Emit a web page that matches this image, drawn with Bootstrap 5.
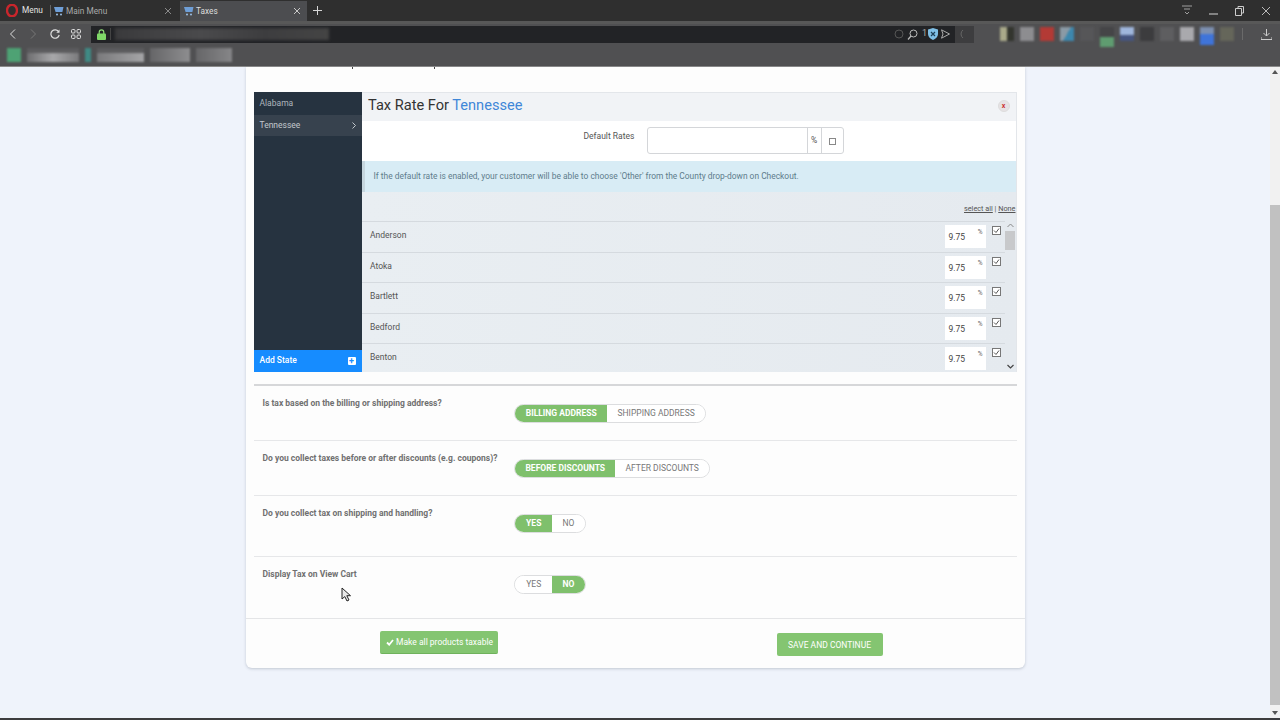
<!DOCTYPE html>
<html lang="en">
<head>
<meta charset="utf-8">
<title>Taxes</title>
<link href="https://cdn.jsdelivr.net/npm/bootstrap@5.3.0/dist/css/bootstrap.min.css" rel="stylesheet">
<style>
html,body{height:720px;overflow:hidden;background:#eff3fb;font-family:Roboto,"Liberation Sans",sans-serif}
.tabstrip{height:21px;background:#2f2f2f;color:#c9c9c9;font-size:8.3px}
.opera-menu{width:50px;padding-left:6px;gap:4px;color:#e4e4e4}
.sep-v{width:1px;height:12px;background:#666}
.tab-item{height:20px;padding:0 6px 0 4px;gap:2px;margin-top:1px}
.tab-main{width:129px;color:#a9a9a9;padding-left:3px;padding-right:8px}
.tab-active{background:#4c4d50;width:127px;color:#ddd}
.tab-x{margin-left:auto;display:flex}
.plus-tab{margin-left:6px}
.win-ctl{margin-left:auto;gap:17px;padding-right:9px}
.toolbar{height:23px;background:#505052;border-top:3px solid #585858}
.nav-ico{width:91px;padding-left:9px;gap:13.5px}
.nav-grid{margin-left:-3px}
.urlbar{width:883px;height:17px;background:#222326;padding-left:6px;gap:4px}
.url-sep{width:1px;height:12px;background:#444}
.url-blur{width:214px;height:12px;background:linear-gradient(90deg,#3a3a3c,#4a4a4c 40%,#3d3d3f 70%,#444);filter:blur(1.5px)}
.url-tools{margin-left:auto;gap:3px;color:#aaa;font-size:9px}
.tool-one{margin-left:1px}
.shield-ico{margin-left:-2px}
.moon-box{height:17px;width:19px;background:#3d3d3f;margin-left:2px;display:flex;align-items:center}
.ext-tiles{gap:6px;margin-left:26px}
.tile{width:14px;height:14px;filter:blur(.8px)}
.t1{background:linear-gradient(90deg,#a9a98a 50%,#33352e 50%)}
.t2{background:#8d8d90}.t3{background:#b33a35}.t4{background:linear-gradient(120deg,#8b9aa5 50%,#3d87ad 50%)}
.t5{background:#565658}.t6{background:linear-gradient(180deg,#454547 50%,#5f9c70 50%);height:20px;margin-top:6px}
.t7{background:linear-gradient(180deg,#9fb6dc 60%,#46557f 60%)}.t8{background:#3c3c3e}.t9{background:#5e5e60}.t10{background:#a9a9ad}
.t11{background:linear-gradient(180deg,#7c8fb0 40%,#3f74d9 40%);height:18px;margin-top:4px}.t12{background:#65665a}
.ext-sep{width:1px;height:12px;background:#6a6a6a;margin-left:8px}
.bookbar{height:23px;background:#505052;padding-left:7px;gap:6px;border-bottom:1px solid #8a8a8a}
.bk{height:14px;filter:blur(1.2px)}
.bk-g{width:14px;background:#4ea274}.bk-t{width:6px;background:#3f8a84}
.bk-a{width:52px;background:linear-gradient(180deg,#5c5c5e 35%,transparent 35%),linear-gradient(90deg,#6e6e70,#a8a8aa 50%,#7a7a7c)}
.bk-b{width:47px;background:linear-gradient(180deg,#5c5c5e 35%,transparent 35%),linear-gradient(90deg,#7a7a7c,#a5a5a7)}
.bk-c{width:40px;background:linear-gradient(90deg,#666668,#8e8e90)}.bk-d{width:36px;background:linear-gradient(90deg,#666668,#868688)}
.pagewrap{height:651px}
.pagemain{flex:1 1 auto;min-width:0}
.sbar{width:10px;background:#f1f1f1;position:relative}
.sbar-thumb{background:#c1c1c1;height:500px;margin-top:128px}
.sbar-up,.sbar-down{height:10px;display:flex;justify-content:center;align-items:center}
.sbar-down{position:absolute;bottom:0;left:0;right:0}
.sheet{width:779px;height:601px;background:#fdfdfd;border-radius:0 0 6px 6px;box-shadow:0 1px 3px rgba(60,70,90,.25);padding:25px 8px 0;position:relative}
.tick{position:absolute;top:0;width:1px;height:2px;background:#444}
.tick-a{left:106px}.tick-b{left:188px}
.panel{height:280px;border-top:1px solid #e3e6ea;border-right:1px solid #e3e6ea}
.side{width:108px;background:#263340;color:#b5bcc3;font-size:8.5px;margin-top:-1px}
.side-item{height:23px;padding:0 6px;color:#aeb6bd}
.side-on{background:#37424e;color:#c2c8cd;height:21px}
.side-add{height:22px;margin-top:auto;background:#168cff;color:#fff;padding:0 6px 2px;font-weight:500}
.plus-box{width:8px;height:8px;background:#fff;border-radius:1px;color:#168cff;font-size:9px;line-height:8px;text-align:center;font-weight:700;margin-top:2px}
.ratepane{min-width:0}
.rp-head{height:28px;background:#f1f3f6;padding:0 6px 2px 6.5px;color:#333;font-size:14.6px}
.rp-head .st{color:#3f87d8}
.close-dot{width:12px;height:12px;border-radius:50%;background:#e6e2e4;border:1px solid #ddd;color:#c33;font-size:7px;line-height:10px;text-align:center;font-weight:700}
.rp-def{height:40px;background:#fff;font-size:8.5px;color:#555;padding-top:6px;padding-left:222px;gap:0}
.rp-lab{width:63px;padding-top:3px}
.grp{height:27px;border:1px solid #d4d6d9;border-radius:3px;width:197px;background:#fff;color:#555}
.grp-in{flex:1 1 auto}
.grp-p{width:14px;border-left:1px solid #d4d6d9;font-size:8.5px}
.grp-c{width:22px;border-left:1px solid #d4d6d9}
.cb-empty{width:7px;height:7px;border:1px solid #888;display:block;margin-top:2px}
.rp-note{height:31px;margin:0;padding:0 9px;background:#d8ecf5;border:0;border-left:3px solid #c6d6de;border-radius:0;color:#5e7c8c;font-size:8.42px}
.rp-list{flex:1 1 auto;min-height:0;background:linear-gradient(90deg,#e9eef2,#e5eaef);position:relative}
.rp-sel{height:29px;padding:0 0 6px;font-size:7.3px;color:#555}
.rp-sel a{color:#555}
.rp-rows{height:151px;overflow:hidden;padding-right:11px}
.rp-row{height:30.5px;border-top:1px solid #d5dadf;font-size:8.5px;color:#555;padding-left:8.5px;position:relative}
.rp-name{padding-top:7px}
.rp-input{width:41px;height:23px;background:#fff;margin-top:3px;margin-left:auto;position:relative;font-size:8.5px;color:#444;padding:6px 0 0 4px}
.rp-input i{position:absolute;right:3px;top:3px;font-size:6.5px;font-style:normal;color:#666}
.rp-chk{width:19px;padding:2px 0 0 6px}
.in-sb{position:absolute;right:0;top:29px;bottom:0;width:11px}
.in-thumb{width:10px;height:19px;background:#c8c9cb;margin:1px auto 0}
.in-arrow{height:9px;display:flex;justify-content:center;align-items:center}
.in-arrow-d{position:absolute;bottom:1px;left:0;right:0}
.qrow{border-top:1px solid #e6e7e9;padding-left:9px;font-size:8.5px;color:#707070;font-weight:700}
.q1{height:56px;border-top:2px solid #d6d7d9;margin-top:12px}
.q2{height:55px}.q3{height:61px}.q4{height:61.5px}
.qtext{width:251.5px;padding-top:11px}
.pill{border:1px solid #dcdddf;border-radius:10px;overflow:hidden;background:#fff;font-size:8.5px;font-weight:400;margin-top:18px;height:19px}
.pill .btn{border:0;border-radius:0;padding:0 10.5px 0 11px;font-size:8.5px;line-height:17px;color:#777;text-transform:uppercase;background:#fff}
.pill .btn.is-on{background:#7fc06c;color:#fff;font-weight:700}
.pill .btn.w-93x{width:92.5px;padding:0}
.pill .btn.w-101x{width:100.5px;padding:0}
.pill .btn.w-38x{width:37.5px;padding:0}
.foot{border-top:1px solid #e4e5e7;margin:0 -8px;height:49px;padding-left:134px;align-items:flex-start}
.foot .btn{background:#84c571;border:0;color:#fff;border-radius:2px;font-family:"Roboto",sans-serif;font-size:8.5px;padding:0}
.foot .btn-tax{width:118px;height:23px;margin-top:12px;border-bottom:1px solid #6fb25c;padding:2px 0 0 2px}
.foot .btn-save{width:106px;height:23px;margin-top:14px;margin-left:279px;padding:3px 0 0}
.bottomline{height:2px;background:#3c3c3e}
.cursor-pt{position:absolute;left:341px;top:587px;pointer-events:none}
</style>
</head>
<body class="position-relative">
<div class="tabstrip d-flex align-items-center">
  <div class="opera-menu d-flex align-items-center">
    <svg width="12" height="13" viewBox="0 0 12 13"><ellipse cx="6" cy="6.500" rx="5" ry="5.800" fill="none" stroke="#c8262c" stroke-width="2.400"/></svg><span>Menu</span>
  </div>
  <span class="sep-v"></span>
  <div class="tab-item tab-main d-flex align-items-center">
    <svg width="10" height="10" viewBox="0 0 10 10"><path d="M0 1h9.500L8.400 6H1.600z" fill="#6f9fd8"/><circle cx="3" cy="8.400" r="1" fill="#9cc0e6"/><circle cx="7" cy="8.400" r="1" fill="#9cc0e6"/></svg>
    <span>Main Menu</span>
    <span class="tab-x"><svg width="8" height="8" viewBox="0 0 8 8"><path d="M1 1l6 6M7 1L1 7" stroke="#8a8a8a"/></svg></span>
  </div>
  <div class="tab-item tab-active d-flex align-items-center">
    <svg width="10" height="10" viewBox="0 0 10 10"><path d="M0 1h9.500L8.400 6H1.600z" fill="#6f9fd8"/><circle cx="3" cy="8.400" r="1" fill="#9cc0e6"/><circle cx="7" cy="8.400" r="1" fill="#9cc0e6"/></svg>
    <span>Taxes</span>
    <span class="tab-x"><svg width="8" height="8" viewBox="0 0 8 8"><path d="M1 1l6 6M7 1L1 7" stroke="#c8c8c8"/></svg></span>
  </div>
  <svg class="plus-tab" width="9" height="9" viewBox="0 0 9 9"><path d="M4.500 0v9M0 4.500h9" stroke="#d5d5d5"/></svg>
  <div class="win-ctl d-flex align-items-center">
    <svg width="10" height="11" viewBox="0 0 10 11"><path d="M0 1h10M2 4h6M3 7l2 2 2-2" stroke="#a0a0a0" fill="none"/></svg>
    <svg width="9" height="9" viewBox="0 0 9 9"><path d="M0 8h9" stroke="#bbb" stroke-width="1.200"/></svg>
    <svg width="9" height="10" viewBox="0 0 9 10"><path d="M3 2V.5h5.500V7H7M.5 2.500H6.500V9.500H.5z" stroke="#ccc" fill="none"/></svg>
    <svg width="10" height="10" viewBox="0 0 10 10"><path d="M1 1l8 8M9 1L1 9" stroke="#bbb"/></svg>
  </div>
</div>
<div class="toolbar d-flex align-items-center">
  <div class="nav-ico d-flex align-items-center">
    <svg width="7" height="10" viewBox="0 0 7 10"><path d="M6 .5L1.500 5 6 9.500" stroke="#ddd" fill="none"/></svg>
    <svg width="7" height="10" viewBox="0 0 7 10"><path d="M1 .5L5.500 5 1 9.500" stroke="#777" fill="none"/></svg>
    <svg width="10" height="10" viewBox="0 0 10 10"><path d="M8.800 3A4.200 4.200 0 1 0 9.200 6" stroke="#ddd" fill="none" stroke-width="1.200"/><path d="M9.500.5v3.200H6.300z" fill="#ddd"/></svg>
    <svg class="nav-grid" width="10" height="10" viewBox="0 0 10 10"><g fill="none" stroke="#ddd"><rect x=".5" y=".5" width="3.500" height="3.500" rx="1"/><rect x="6" y=".5" width="3.500" height="3.500" rx="1"/><rect x=".5" y="6" width="3.500" height="3.500" rx="1"/><rect x="6" y="6" width="3.500" height="3.500" rx="1"/></g></svg>
  </div>
  <div class="urlbar d-flex align-items-center">
    <svg width="9" height="11" viewBox="0 0 9 11"><path d="M2.200 5V3.200a2.300 2.300 0 0 1 4.600 0V5" stroke="#8fdc78" fill="none" stroke-width="1.200"/><rect y="4.500" width="9" height="6.500" rx="1" fill="#7fd868"/></svg>
    <span class="url-sep"></span>
    <span class="url-blur"></span>
    <div class="url-tools d-flex align-items-center">
      <svg width="10" height="10" viewBox="0 0 10 10"><circle cx="5" cy="5" r="4" fill="none" stroke="#555"/></svg>
      <svg width="11" height="11" viewBox="0 0 11 11"><circle cx="6.500" cy="4.500" r="3.500" fill="none" stroke="#bbb"/><path d="M4 7l-3 3.500" stroke="#bbb" stroke-width="1.200"/></svg>
      <span class="tool-one">1</span>
      <svg class="shield-ico" width="10" height="12" viewBox="0 0 10 12"><path d="M0 1.500L5 0l5 1.500V6c0 3-2.500 5-5 6-2.500-1-5-3-5-6z" fill="#7fbfe6"/><path d="M3 4l4 4M7 4L3 8" stroke="#1d3f58" stroke-width="1.200"/></svg>
      <svg width="9" height="10" viewBox="0 0 9 10"><path d="M.5.800L8.500 5 .5 9.200 2 5z" fill="none" stroke="#aaa"/></svg>
      <span class="moon-box"><svg width="10" height="10" viewBox="0 0 10 10"><path d="M8 1A5 5 0 0 0 8 9" fill="none" stroke="#666"/></svg></span>
    </div>
  </div>
  <div class="ext-tiles d-flex align-items-center">
    <span class="tile t1"></span><span class="tile t2"></span><span class="tile t3"></span><span class="tile t4"></span><span class="tile t5"></span><span class="tile t6"></span><span class="tile t7"></span><span class="tile t8"></span><span class="tile t9"></span><span class="tile t10"></span><span class="tile t11"></span><span class="tile t12"></span>
  </div>
  <span class="ext-sep"></span>
  <svg class="ms-auto me-2" width="11" height="11" viewBox="0 0 11 11"><path d="M5.500 0v7M2.500 4l3 3 3-3M0 8v2.500h11V8" stroke="#ccc" fill="none"/></svg>
</div>
<div class="bookbar d-flex align-items-center">
  <span class="bk bk-g"></span><span class="bk bk-a"></span><span class="bk bk-t"></span><span class="bk bk-b"></span><span class="bk bk-c"></span><span class="bk bk-d"></span>
</div>
<div class="pagewrap d-flex">
  <div class="pagemain">
    <div class="sheet mx-auto">
      <span class="tick tick-a"></span><span class="tick tick-b"></span>
      <div class="panel d-flex">
        <div class="side d-flex flex-column">
          <div class="side-item d-flex align-items-center">Alabama</div>
          <div class="side-item side-on d-flex align-items-center justify-content-between">Tennessee
            <svg width="4" height="7" viewBox="0 0 4 7"><path d="M.5.500l3 3-3 3" stroke="#c2c8cd" fill="none"/></svg>
          </div>
          <div class="side-add d-flex align-items-center justify-content-between">Add State<span class="plus-box">+</span></div>
        </div>
        <div class="ratepane flex-grow-1 d-flex flex-column">
          <div class="rp-head d-flex align-items-center justify-content-between">
            <div>Tax Rate For <span class="st">Tennessee</span></div>
            <span class="close-dot">x</span>
          </div>
          <div class="rp-def d-flex">
            <div class="rp-lab">Default Rates</div>
            <div class="grp d-flex">
              <div class="grp-in"></div>
              <div class="grp-p d-flex align-items-center justify-content-center">%</div>
              <div class="grp-c d-flex align-items-center justify-content-center"><span class="cb-empty"></span></div>
            </div>
          </div>
          <div class="alert rp-note d-flex align-items-center">If the default rate is enabled, your customer will be able to choose 'Other' from the County drop-down on Checkout.</div>
          <div class="rp-list d-flex flex-column">
            <div class="rp-sel d-flex align-items-end justify-content-end"><a href="#">select all</a>&nbsp;|&nbsp;<a href="#">None</a></div>
            <div class="rp-rows">
              <div class="rp-row d-flex"><div class="rp-name">Anderson</div><div class="rp-input">9.75<i>%</i></div><div class="rp-chk"><svg width="9" height="9" viewBox="0 0 9 9"><rect x=".5" y=".5" width="8" height="8" fill="#fff" stroke="#777"/><path d="M2 4.500l2 2 3-4" stroke="#555" fill="none"/></svg></div></div>
              <div class="rp-row d-flex"><div class="rp-name">Atoka</div><div class="rp-input">9.75<i>%</i></div><div class="rp-chk"><svg width="9" height="9" viewBox="0 0 9 9"><rect x=".5" y=".5" width="8" height="8" fill="#fff" stroke="#777"/><path d="M2 4.500l2 2 3-4" stroke="#555" fill="none"/></svg></div></div>
              <div class="rp-row d-flex"><div class="rp-name">Bartlett</div><div class="rp-input">9.75<i>%</i></div><div class="rp-chk"><svg width="9" height="9" viewBox="0 0 9 9"><rect x=".5" y=".5" width="8" height="8" fill="#fff" stroke="#777"/><path d="M2 4.500l2 2 3-4" stroke="#555" fill="none"/></svg></div></div>
              <div class="rp-row d-flex"><div class="rp-name">Bedford</div><div class="rp-input">9.75<i>%</i></div><div class="rp-chk"><svg width="9" height="9" viewBox="0 0 9 9"><rect x=".5" y=".5" width="8" height="8" fill="#fff" stroke="#777"/><path d="M2 4.500l2 2 3-4" stroke="#555" fill="none"/></svg></div></div>
              <div class="rp-row d-flex"><div class="rp-name">Benton</div><div class="rp-input">9.75<i>%</i></div><div class="rp-chk"><svg width="9" height="9" viewBox="0 0 9 9"><rect x=".5" y=".5" width="8" height="8" fill="#fff" stroke="#777"/><path d="M2 4.500l2 2 3-4" stroke="#555" fill="none"/></svg></div></div>
            </div>
            <div class="in-sb">
              <div class="in-arrow"><svg width="7" height="5" viewBox="0 0 7 5"><path d="M.5 4l3-3 3 3" stroke="#888" fill="none"/></svg></div>
              <div class="in-thumb"></div>
              <div class="in-arrow in-arrow-d"><svg width="7" height="5" viewBox="0 0 7 5"><path d="M.5 1l3 3 3-3" stroke="#444" fill="none" stroke-width="1.200"/></svg></div>
            </div>
          </div>
        </div>
      </div>
      <div class="qrow q1 d-flex">
        <div class="qtext">Is tax based on the billing or shipping address?</div>
        <div class="btn-group pill"><button class="btn is-on w-93x">Billing Address</button><button class="btn">Shipping Address</button></div>
      </div>
      <div class="qrow q2 d-flex">
        <div class="qtext">Do you collect taxes before or after discounts (e.g. coupons)?</div>
        <div class="btn-group pill"><button class="btn is-on w-101x">Before Discounts</button><button class="btn">After Discounts</button></div>
      </div>
      <div class="qrow q3 d-flex">
        <div class="qtext">Do you collect tax on shipping and handling?</div>
        <div class="btn-group pill"><button class="btn is-on w-38x">Yes</button><button class="btn">No</button></div>
      </div>
      <div class="qrow q4 d-flex">
        <div class="qtext">Display Tax on View Cart</div>
        <div class="btn-group pill"><button class="btn w-38x">Yes</button><button class="btn is-on">No</button></div>
      </div>
      <div class="foot d-flex">
        <button class="btn btn-tax"><svg width="8" height="7" viewBox="0 0 8 7"><path d="M1 3.500l2.200 2.200L7 1" stroke="#fff" stroke-width="1.800" fill="none"/></svg> Make all products taxable</button>
        <button class="btn btn-save">SAVE AND CONTINUE</button>
      </div>
    </div>
  </div>
  <div class="sbar">
    <div class="sbar-up"><svg width="6" height="4" viewBox="0 0 6 4"><path d="M0 4l3-4 3 4z" fill="#555"/></svg></div>
    <div class="sbar-thumb"></div>
    <div class="sbar-down"><svg width="6" height="4" viewBox="0 0 6 4"><path d="M0 0l3 4 3-4z" fill="#555"/></svg></div>
  </div>
</div>
<div class="bottomline"></div>
<svg class="cursor-pt" width="11" height="15" viewBox="0 0 11 15"><path d="M1 1v11l2.800-2.400L6 14l2-1-2.200-4.300H9.500z" fill="#e8e8e8" stroke="#222" stroke-width="1"/></svg>
<script src="https://cdn.jsdelivr.net/npm/bootstrap@5.3.0/dist/js/bootstrap.bundle.min.js"></script>
</body>
</html>
